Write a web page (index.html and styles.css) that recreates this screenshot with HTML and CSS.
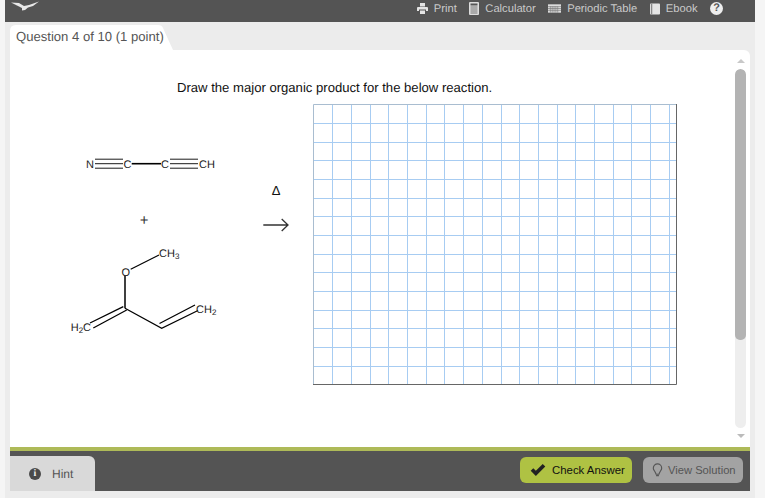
FILE: index.html
```html
<!DOCTYPE html>
<html lang="en">
<head>
<meta charset="utf-8">
<title>Question 4 of 10</title>
<link rel="stylesheet" href="styles.css">
</head>
<body>
<div class="app">
  <header class="topbar">
    <svg class="logo" width="28" height="11" viewBox="0 0 28 11"><path d="M0 2.500 L8 3 L13 6 L18 5 L28 1.500 L22 6 L17 7.500 L14 10 L11 10.500 L11 8 L6 5.500 Z" fill="#e8e8e8"/></svg>
    <nav class="tools">
      <span class="tool"><svg class="ico" width="11" height="11" viewBox="0 0 11 11"><path d="M3 0h5v3.500H3zM1 4h9a1 1 0 0 1 1 1v3H9V6.500H2V8H0V5a1 1 0 0 1 1-1zM3 7.500h5V11H3z" fill="#e4e4e4"/></svg>Print</span>
      <span class="tool"><svg class="ico" width="10" height="13" viewBox="0 0 10 13"><rect width="10" height="13" rx="1" fill="#ddd"/><rect x="1.500" y="1.500" width="7" height="2" fill="#555"/><path d="M1.500 5h7M1.500 7h7M1.500 9h7M1.500 11h7" stroke="#777" stroke-width="1"/></svg>Calculator</span>
      <span class="tool"><svg class="ico" width="13" height="9" viewBox="0 0 14 9"><rect width="14" height="9" fill="#ddd"/><path d="M0 2.500h14M0 4.500h14M0 6.500h14M2.500 2v7M4.500 2v7M6.500 2v7M8.500 2v7M10.500 2v7" stroke="#777" stroke-width=".7"/></svg>Periodic Table</span>
      <span class="tool"><svg class="ico" width="10" height="12" viewBox="0 0 11 12"><rect width="11" height="12" rx="1" fill="#e4e4e4"/><rect x="1" y="0" width="1.500" height="12" fill="#888"/></svg>Ebook</span>
      <span class="help">?</span>
    </nav>
  </header>

  <div class="tabstrip"><div class="tab">Question 4 of 10 (1 point)</div></div>

  <main class="panel">
    <div class="scroll-area">
      <p class="prompt">Draw the major organic product for the below reaction.</p>
      <div class="question">
        <svg class="reaction" width="250" height="260" viewBox="-8 0 250 260">
          <g stroke="#000" fill="none">
            <path d="M24 45.200H52M24 49.700H52M24 54.200H52" stroke-width=".9"/>
            <path d="M60.700 49.700H90" stroke-width="1.600"/>
            <path d="M99 45.200H127M99 49.700H127M99 54.200H127" stroke-width=".9"/>
            <path d="M59.700 155.300L88 141" stroke-width="1.200"/>
            <path d="M54 162V194.300" stroke-width="1.500"/>
            <path d="M52.300 192.700L19 209M55.700 196L22.300 214" stroke-width="1.300"/>
            <path d="M54 194.300L90.700 214.300L127 196.500M88.500 209.500L124 191" stroke-width="1.300"/>
          </g>
          <g class="chem">
            <text x="15" y="53.700">N</text>
            <text x="52.500" y="53.700">C</text>
            <text x="90" y="53.700">C</text>
            <text x="128" y="53.700">CH</text>
            <text x="50.500" y="161.700">O</text>
            <text x="88" y="142.700">CH<tspan class="sub" dy="2">3</tspan></text>
            <text x="125" y="199">CH<tspan class="sub" dy="2">2</tspan></text>
            <text x="-0.300" y="217.300">H<tspan class="sub" dy="2">2</tspan><tspan dy="-2">C</tspan></text>
          </g>
          <text class="plus" x="68.700" y="110.500">+</text>
          <text class="delta" x="205" y="80.500">Δ</text>
          <path d="M192.300 111H217M210.700 105L217 111L210.700 117" stroke="#333" stroke-width="1.300" fill="none"/>
        </svg>
        <svg class="grid" width="364" height="281" viewBox="0 0 364 281">
          <g stroke="#a7ccf2" stroke-width="1">
            <path d="M19.500 0V281M38.500 0V281M57.500 0V281M75.500 0V281M94.500 0V281M113.500 0V281M131.500 0V281M150.500 0V281M169.500 0V281M188.500 0V281M206.500 0V281M225.500 0V281M244.500 0V281M262.500 0V281M281.500 0V281M300.500 0V281M318.500 0V281M337.500 0V281M356.500 0V281"/>
            <path d="M0 19.500H364M0 38.500H364M0 56.500H364M0 75.500H364M0 94.500H364M0 112.500H364M0 131.500H364M0 150.500H364M0 168.500H364M0 187.500H364M0 206.500H364M0 224.500H364M0 243.500H364M0 262.500H364"/>
          </g>
          <path d="M.5 280V.5H363.500" stroke="#a9bdd0" fill="none"/>
          <path d="M363.500 0V280.500H0" stroke="#666" fill="none"/>
        </svg>
      </div>
    </div>
    <div class="scrollbar">
      <span class="arrow up"></span>
      <span class="track"><span class="thumb"></span></span>
      <span class="arrow down"></span>
    </div>
  </main>

  <footer class="footer">
    <div class="hint">
      <span class="info">i</span>Hint
    </div>
    <div class="actions">
      <button class="btn check"><svg width="16" height="12" viewBox="1 0 17 14"><path d="M1 8l3-3 3 3 8-8 3 3-11 11z" fill="#222"/></svg>Check Answer</button>
      <button class="btn solution"><svg width="11" height="14" viewBox="0 0 11 15"><path d="M5.500 1a4.500 4.500 0 0 1 4.500 4.500c0 2-2 3.500-3 6.500H4c-1-3-3-4.500-3-6.500A4.500 4.500 0 0 1 5.500 1zM4 13.500h3" stroke="#555" stroke-width="1.200" fill="none"/></svg>View Solution</button>
    </div>
  </footer>
</div>
</body>
</html>
```
FILE: styles.css
```css
* { box-sizing: border-box; }
html, body { margin: 0; padding: 0; }
body {
  width: 765px;
  height: 498px;
  overflow: hidden;
  background: #f5f5f5;
  font-family: "Liberation Sans", Arial, sans-serif;
  text-rendering: geometricPrecision;
}
.app {
  margin-left: 5px;
  width: 750px;
  height: 498px;
  background: #ececec;
  display: flex;
  flex-direction: column;
}
.topbar {
  height: 22px;
  flex: none;
  background: #545454;
  display: flex;
  justify-content: space-between;
  padding: 0 32px 5px 6px;
  align-items: center;
}
.logo { align-self: flex-start; }
.tools { display: flex; align-items: center; color: #cacaca; font-size: 11.2px; }
.tool { display: flex; align-items: center; margin-right: 12.5px; }
.ico { margin-right: 6px; }
.help {
  width: 13px; height: 13px; border-radius: 50%;
  background: #eee; color: #555;
  font-size: 11px; font-weight: bold; line-height: 13px; text-align: center;
}
.tabstrip { height: 28px; flex: none; padding: 3px 0 0 5px; }
.tab {
  width: 163px;
  height: 25px;
  background: #fff;
  color: #555;
  font-size: 13.1px;
  padding: 4px 0 0 6px;
  clip-path: path("M0 25V6Q0 0 6 0H148Q152 0 153 3L163 25Z");
}
.panel {
  margin: 0 5px;
  height: 397px;
  flex: none;
  background: #fff;
  border-radius: 0 6px 0 0;
  display: flex;
}
.scroll-area { flex: 1; min-width: 0; }
.prompt {
  margin: 30px 0 0 167px;
  font-size: 13.1px;
  line-height: 15px;
  color: #111;
}
.question { display: flex; align-items: flex-start; margin-top: 9px; padding-left: 53px; }
.reaction { flex: none; margin-top: 10px; }
.grid { flex: none; }
.chem { font-size: 11px; fill: #222; }
.sub { font-size: 8px; }
.plus { font-size: 15px; fill: #333; }
.delta { font-size: 13px; fill: #111; text-anchor: middle; }
.scrollbar {
  width: 15px;
  flex: none;
  padding-right: 4px;
  display: flex;
  flex-direction: column;
  align-items: center;
}
.track { flex: 1; width: 11px; background: #eeeeee; border-radius: 6px; margin: 6px 0; overflow: hidden; display: block; }
.thumb { display: block; height: 271px; background: #b3b3b3; border-radius: 5px; }
.arrow { width: 0; height: 0; border-left: 4px solid transparent; border-right: 4px solid transparent; flex: none; }
.arrow.up { border-bottom: 4px solid #c8c8c8; margin-top: 9px; }
.arrow.down { border-top: 4px solid #bbb; margin-bottom: 9px; }
.footer {
  margin: 0 5px;
  height: 44px;
  flex: none;
  background: #545454;
  border-top: 4px solid #aeba58;
  display: flex;
  justify-content: space-between;
  align-items: flex-start;
}
.hint {
  margin-top: 5px;
  width: 85px;
  height: 35px;
  background: #d9d9d9;
  border-radius: 0 6px 0 0;
  color: #555;
  font-size: 12px;
  display: flex;
  align-items: center;
  padding-left: 19px;
}
.info {
  width: 12px; height: 12px; border-radius: 50%;
  background: #4a4a4a; color: #eee;
  font: bold 10px/12px "Liberation Serif", serif;
  text-align: center;
  margin-right: 11px;
}
.actions { display: flex; gap: 11px; padding: 6px 7px 0 0; }
.btn {
  height: 26px;
  border: 0;
  border-radius: 6px;
  font: 11.2px "Liberation Sans", Arial, sans-serif;
  display: flex;
  align-items: center;
  padding: 0;
}
.check { width: 112px; background: #afc243; color: #111; padding-left: 10px; gap: 6px; font-size: 11.4px; }
.solution { width: 100px; background: #a3a3a3; color: #555; padding-left: 9px; gap: 5px; }
```
